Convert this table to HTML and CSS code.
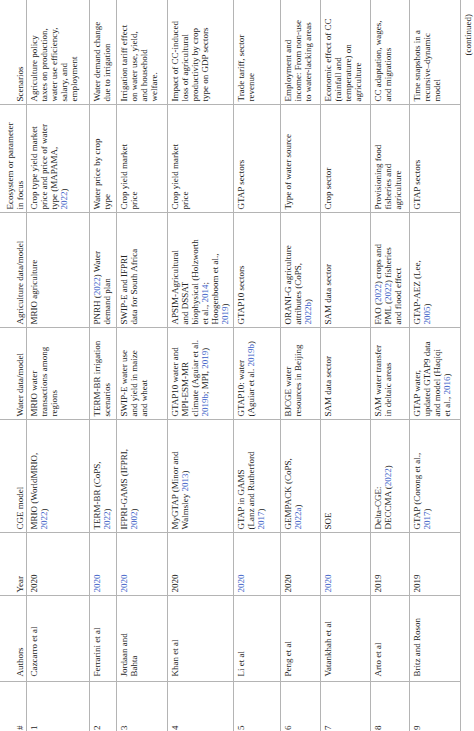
FILE: index.html
```
<!DOCTYPE html>
<html>
<head>
<meta charset="utf-8">
<link rel="stylesheet" href="styles.css">
</head>
<body>
<div class="page">
<table class="tbl">
<colgroup>
<col class="c-num"><col class="c-auth"><col class="c-year"><col class="c-cge"><col class="c-water"><col class="c-agri"><col class="c-eco"><col class="c-scen">
</colgroup>
<thead>
<tr class="r-head">
<th class="num">#</th><th class="auth">Authors</th><th>Year</th><th>CGE model</th><th>Water data/model</th><th>Agriculture data/model</th><th>Ecosystem or parameter<br>in focus</th><th>Scenarios</th>
</tr>
</thead>
<tbody>
<tr class="r1">
<td class="num">1</td><td class="auth">Cazcarro et al</td><td>2020</td>
<td>MRIO (WorldMRIO,<br><a>2022</a>)</td>
<td>MRIO water<br>transactions among<br>regions</td>
<td>MRIO agriculture</td>
<td>Crop type yield market<br>price and price of water<br>type (MAPAMA,<br><a>2022</a>)</td>
<td>Agriculture policy<br>taxes on production,<br>water use efficiency,<br>salary, and<br>employment</td>
</tr>
<tr class="r2">
<td class="num">2</td><td class="auth">Ferrarini et al</td><td><a>2020</a></td>
<td>TERM-BR (CoPS,<br><a>2022</a>)</td>
<td>TERM-BR irrigation<br>scenarios</td>
<td>PNRH (<a>2022</a>) Water<br>demand plan</td>
<td>Water price by crop<br>type</td>
<td>Water demand change<br>due to irrigation</td>
</tr>
<tr class="r3">
<td class="num">3</td><td class="auth">Jordaan and<br>Bahta</td><td><a>2020</a></td>
<td>IFPRI-GAMS (IFPRI,<br><a>2002</a>)</td>
<td>SWIP-E water use<br>and yield in maize<br>and wheat</td>
<td>SWIP-E and IFPRI<br>data for South Africa</td>
<td>Crop yield market<br>price</td>
<td>Irrigation tariff effect<br>on water use, yield,<br>and household<br>welfare.</td>
</tr>
<tr class="r4">
<td class="num">4</td><td class="auth">Khan et al</td><td>2020</td>
<td>MyGTAP (Minor and<br>Walmsley <a>2013</a>)</td>
<td>GTAP10 water and<br>MPI-ESM-MR<br>climate (Aguiar et al.<br><a>2019b</a>; MPI, <a>2019</a>)</td>
<td>APSIM-Agricultural<br>and DSSAT<br>biophysical (Holzworth<br>et al., <a>2014</a>;<br>Hoogenboom et al.,<br><a>2019</a>)</td>
<td>Crop yield market<br>price</td>
<td>Impact of CC-induced<br>loss of agricultural<br>productivity by crop<br>type on GDP sectors</td>
</tr>
<tr class="r5">
<td class="num">5</td><td class="auth">Li et al</td><td><a>2020</a></td>
<td>GTAP in GAMS<br>(Lanz and Rutherford<br><a>2017</a>)</td>
<td>GTAP10: water<br>(Aguiar et al. <a>2019b</a>)</td>
<td>GTAP10 sectors</td>
<td>GTAP sectors</td>
<td>Trade tariff, sector<br>revenue</td>
</tr>
<tr class="r6">
<td class="num">6</td><td class="auth">Peng et al</td><td>2020</td>
<td>GEMPACK (CoPS,<br><a>2022a</a>)</td>
<td>BJCGE water<br>resources in Beijing</td>
<td>ORANI-G agriculture<br>attributes (CoPS,<br><a>2022b</a>)</td>
<td>Type of water source</td>
<td>Employment and<br>income: From non-use<br>to water-lacking areas</td>
</tr>
<tr class="r7">
<td class="num">7</td><td class="auth">Vatankhah et al</td><td><a>2020</a></td>
<td>SOE</td>
<td>SAM data sector</td>
<td>SAM data sector</td>
<td>Crop sector</td>
<td>Economic effect of CC<br>(rainfall and<br>temperature) on<br>agriculture</td>
</tr>
<tr class="r8">
<td class="num">8</td><td class="auth">Arto et al</td><td>2019</td>
<td>Delta-CGE:<br>DECCMA (<a>2022</a>)</td>
<td>SAM water transfer<br>in deltaic areas</td>
<td>FAO (<a>2022</a>) crops and<br>PML (<a>2022</a>) fisheries<br>and flood effect</td>
<td>Provisioning food<br>fisheries and<br>agriculture</td>
<td>CC adaptation, wages,<br>and migrations</td>
</tr>
<tr class="r9">
<td class="num">9</td><td class="auth">Britz and Roson</td><td>2019</td>
<td>GTAP (Corong et al.,<br><a>2017</a>)</td>
<td>GTAP water,<br>updated GTAP9 data<br>and model (Haqiqi<br>et al., <a>2016</a>)</td>
<td>GTAP-AEZ (Lee,<br><a>2005</a>)</td>
<td>GTAP sectors</td>
<td>Time snapshots in a<br>recursive–dynamic<br>model</td>
</tr>
</tbody>
</table>
<div class="cont">(continued)</div>
</div>
</body>
</html>
```
FILE: styles.css
```
html, body {
  margin: 0;
  padding: 0;
  background: #fff;
}
body {
  width: 474px;
  height: 731px;
  overflow: hidden;
}
.page {
  width: 731px;
  height: 474px;
  transform-origin: 0 0;
  transform: translateY(731px) rotate(-90deg);
  font-family: "Liberation Serif", "Times New Roman", serif;
  font-size: 9px;
  line-height: 10px;
  color: #222;
  overflow: hidden;
}
.tbl {
  border-collapse: collapse;
  table-layout: fixed;
  width: 746px;
}
.c-num { width: 49px; }
.c-auth { width: 86px; }
.c-year { width: 63px; }
.c-cge { width: 113px; }
.c-water { width: 92px; }
.c-agri { width: 115px; }
.c-eco { width: 108px; }
.c-scen { width: 120px; }
.tbl th, .tbl td {
  text-align: left;
  font-weight: normal;
  white-space: nowrap;
  padding: 2px 3px 0 3px;
  border-left: 1px solid #b4b4b4;
  border-bottom: 1px solid #b4b4b4;
  vertical-align: top;
}
.tbl th {
  vertical-align: bottom;
  padding-bottom: 1px;
}
.tbl .num {
  border-left: none;
  padding-left: 1px;
}
.tbl .auth {
  padding-left: 5px;
}
.tbl a {
  color: #3d5fc8;
}
.r-head { height: 26px; }
.r1 { height: 63px; }
.r2 { height: 27px; }
.r3 { height: 51px; }
.r4 { height: 66px; }
.r5 { height: 47px; }
.r6 { height: 40px; }
.r7 { height: 50px; }
.r8 { height: 39px; }
.r9 { height: 51px; }
.cont {
  text-align: right;
  padding-right: 14px;
  padding-top: 2px;
}
```
